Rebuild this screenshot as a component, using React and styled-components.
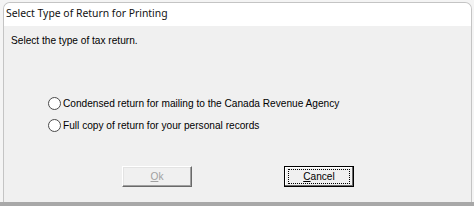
import React from "react";
import styled, { createGlobalStyle } from "styled-components";

const GlobalStyle = createGlobalStyle`
  html, body {
    margin: 0;
    padding: 0;
    width: 474px;
    height: 206px;
    overflow: hidden;
    background: #f4f4f4;
  }
`;

const Page = styled.div`
  width: 474px;
  height: 206px;
  box-sizing: border-box;
  padding: 2px 2px 4px 3px;
  background: linear-gradient(to bottom, #f4f4f4 0, #f4f4f4 202px, #a8a8a8 202px);
  color: #000;
`;

const Window = styled.div`
  height: 100%;
  display: flex;
  flex-direction: column;
  box-sizing: border-box;
  border: 1px solid #c4c4c4;
  border-bottom: none;
  border-radius: 7px 7px 0 0;
  background: #f0f0f0;
  overflow: hidden;
`;

const TitleBar = styled.div`
  height: 23px;
  box-sizing: border-box;
  display: flex;
  align-items: center;
  padding: 0 0 3px 2px;
  background: #ffffff;
  font-family: "Noto Sans", "Open Sans", sans-serif;
  font-size: 10.4px;
  color: #111;
`;

const Body = styled.div`
  flex: 1;
  display: flex;
  flex-direction: column;
  padding: 8px 0 0 7px;
  font-family: "Liberation Sans", Arial, sans-serif;
  font-size: 10.15px;
`;

const Prompt = styled.div`
  line-height: 14px;
`;

const Options = styled.div`
  display: flex;
  flex-direction: column;
  gap: 6px;
  margin: 47px 0 0 37px;
`;

const Option = styled.label`
  display: flex;
  align-items: center;
  gap: 2px;
  height: 16px;
`;

const Radio = styled.span`
  width: 13px;
  height: 13px;
  box-sizing: border-box;
  border: 1px solid #4a4a4a;
  border-radius: 50%;
  background: #fff;
`;

const Buttons = styled.div`
  display: flex;
  gap: 92px;
  margin: 33px 0 0 111px;
`;

const Button = styled.div`
  width: 70px;
  height: 21px;
  box-sizing: border-box;
  display: flex;
  align-items: center;
  justify-content: center;
  background: #f0f0f0;
  border: 1px solid;
  border-color: ${(p) => (p.$default ? "#000" : "#ffffff #696969 #696969 #ffffff")};
  box-shadow: ${(p) =>
    p.$default
      ? "inset -1px -1px 0 #696969, inset 1px 1px 0 #ffffff"
      : "inset -1px -1px 0 #a0a0a0, inset 1px 1px 0 #e3e3e3"};
  color: ${(p) => (p.$disabled ? "#a0a0a0" : "#000")};
`;

const Focus = styled.span`
  width: 62px;
  height: 15px;
  box-sizing: border-box;
  display: flex;
  align-items: center;
  justify-content: center;
  border: 1px dotted #000;
`;

const Mnemonic = styled.span`
  text-decoration: underline;
`;

export default function App() {
  return (
    <>
      <GlobalStyle />
      <Page>
        <Window>
          <TitleBar>Select Type of Return for Printing</TitleBar>
          <Body>
            <Prompt>Select the type of tax return.</Prompt>
            <Options>
              <Option>
                <Radio />
                Condensed return for mailing to the Canada Revenue Agency
              </Option>
              <Option>
                <Radio />
                Full copy of return for your personal records
              </Option>
            </Options>
            <Buttons>
              <Button $disabled>
                <Mnemonic>O</Mnemonic>k
              </Button>
              <Button $default>
                <Focus>
                  <Mnemonic>C</Mnemonic>ancel
                </Focus>
              </Button>
            </Buttons>
          </Body>
        </Window>
      </Page>
    </>
  );
}
